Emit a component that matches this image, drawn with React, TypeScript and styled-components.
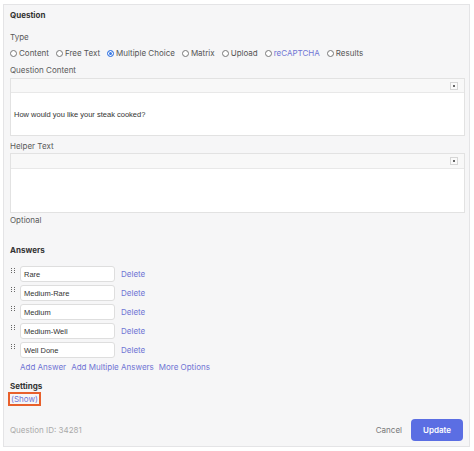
import React from "react";
import styled, { createGlobalStyle } from "styled-components";

const Global = createGlobalStyle`
  html, body { margin: 0; padding: 0; background: #ffffff; }
  body { font-family: Inter, "Noto Sans", sans-serif; }
  * { box-sizing: border-box; }
`;

const Panel = styled.div`
  margin: 4px 4px 0 3px;
  width: 467px;
  height: 443px;
  border: 1px solid #e4e4e6;
  background: #f6f6f7;
  padding: 4px 6px 0 6px;
  display: flex;
  flex-direction: column;
  font-size: 8px;
  color: #555;
`;

const Title = styled.div<{ $mt?: number }>`
  font-weight: 700;
  color: #333;
  line-height: 12px;
  font-size: 8px;
  margin-top: ${(p) => p.$mt ?? 0}px;
`;

const Label = styled.div<{ $mt?: number }>`
  line-height: 12px;
  color: #5a5a5a;
  margin-top: ${(p) => p.$mt ?? 0}px;
`;

const RadioRow = styled.div`
  display: flex;
  align-items: center;
  gap: 7px;
  height: 12px;
  margin-top: 4px;
`;

const RadioOption = styled.label<{ $accent?: boolean }>`
  display: flex;
  align-items: center;
  gap: 2px;
  color: ${(p) => (p.$accent ? "#6f74d4" : "#555")};
`;

const RadioDot = styled.span<{ $checked?: boolean }>`
  width: 7px;
  height: 7px;
  border-radius: 50%;
  border: 1px solid ${(p) => (p.$checked ? "#3d7be3" : "#777")};
  background: ${(p) => (p.$checked ? "#3d7be3" : "#fff")};
  box-shadow: ${(p) => (p.$checked ? "inset 0 0 0 1px #fff" : "none")};
  flex: none;
`;

const Editor = styled.div<{ $mt: number; $toolbar: number; $body: number }>`
  margin-top: ${(p) => p.$mt}px;
  width: 455px;
  border: 1px solid #e2e2e2;
  background: #fff;
  display: flex;
  flex-direction: column;
  .tb {
    height: ${(p) => p.$toolbar}px;
  }
  .bd {
    height: ${(p) => p.$body}px;
  }
`;

const Toolbar = styled.div`
  background: #f8f8f8;
  border-bottom: 1px solid #e8e8e8;
  display: flex;
  justify-content: flex-end;
  align-items: center;
  padding-right: 6px;
`;

const ToolButton = styled.span`
  width: 8px;
  height: 8px;
  border: 1px solid #d6d6d6;
  background: #fafafa;
  display: flex;
  align-items: center;
  justify-content: center;
  &::after {
    content: "";
    width: 2px;
    height: 2px;
    background: #666;
  }
`;

const EditorBody = styled.div`
  display: flex;
  align-items: center;
  padding-left: 3px;
  font-family: "Liberation Sans", Arial, sans-serif;
  font-size: 7.5px;
  color: #333;
`;

const AnswerList = styled.div`
  display: flex;
  flex-direction: column;
  gap: 3px;
  margin-top: 10px;
`;

const AnswerRow = styled.div`
  display: flex;
  align-items: center;
  height: 16px;
`;

const Handle = styled.svg`
  width: 4px;
  height: 6px;
  margin-left: 1px;
  align-self: flex-start;
  margin-top: 2px;
  flex: none;
`;

const AnswerInput = styled.div`
  width: 95px;
  height: 16px;
  margin-left: 5px;
  background: #fff;
  border: 1px solid #dedede;
  border-radius: 3px;
  display: flex;
  align-items: center;
  padding-left: 3px;
  font-family: "Liberation Sans", Arial, sans-serif;
  font-size: 7.5px;
  color: #333;
`;

const Link = styled.a<{ $ml?: number }>`
  color: #6f74d4;
  text-decoration: none;
  margin-left: ${(p) => p.$ml ?? 0}px;
  cursor: pointer;
`;

const LinksRow = styled.div`
  display: flex;
  gap: 5px;
  margin-top: 3px;
  margin-left: 10px;
  line-height: 12px;
`;

const ShowBox = styled.div`
  margin-left: -2px;
  align-self: flex-start;
  border: 2px solid #e8602c;
  line-height: 10px;
  padding: 0 1px;
`;

const Footer = styled.div`
  margin-top: 13px;
  display: flex;
  align-items: center;
  height: 22px;
`;

const Meta = styled.span`
  color: #aaa;
  flex: 1;
`;

const CancelButton = styled.span`
  color: #777;
  margin-right: 9px;
`;

const UpdateButton = styled.button`
  width: 52px;
  height: 22px;
  border: none;
  border-radius: 4px;
  background: #5b6ee3;
  color: #fff;
  font-family: inherit;
  font-size: 8px;
  font-weight: 600;
  padding: 0;
`;

const types = [
  { label: "Content" },
  { label: "Free Text" },
  { label: "Multiple Choice", checked: true },
  { label: "Matrix" },
  { label: "Upload" },
  { label: "reCAPTCHA", accent: true },
  { label: "Results" },
];

const answers = ["Rare", "Medium-Rare", "Medium", "Medium-Well", "Well Done"];

function DragHandle() {
  return (
    <Handle viewBox="0 0 4 6">
      {[0, 2, 4].map((y) =>
        [0, 3].map((x) => <rect key={`${x}-${y}`} x={x} y={y} width="1" height="1" fill="#666" />)
      )}
    </Handle>
  );
}

export default function App() {
  return (
    <>
      <Global />
      <Panel>
        <Title>Question</Title>
        <Label $mt={10}>Type</Label>
        <RadioRow>
          {types.map((t) => (
            <RadioOption key={t.label} $accent={t.accent}>
              <RadioDot $checked={t.checked} />
              {t.label}
            </RadioOption>
          ))}
        </RadioRow>
        <Label $mt={5}>Question Content</Label>
        <Editor $mt={2} $toolbar={14} $body={42}>
          <Toolbar className="tb">
            <ToolButton />
          </Toolbar>
          <EditorBody className="bd">How would you like your steak cooked?</EditorBody>
        </Editor>
        <Label $mt={4}>Helper Text</Label>
        <Editor $mt={1} $toolbar={15} $body={43}>
          <Toolbar className="tb">
            <ToolButton />
          </Toolbar>
          <EditorBody className="bd" />
        </Editor>
        <Label $mt={1}>Optional</Label>
        <Title $mt={18}>Answers</Title>
        <AnswerList>
          {answers.map((a) => (
            <AnswerRow key={a}>
              <DragHandle />
              <AnswerInput>{a}</AnswerInput>
              <Link $ml={6}>Delete</Link>
            </AnswerRow>
          ))}
        </AnswerList>
        <LinksRow>
          <Link>Add Answer</Link>
          <Link>Add Multiple Answers</Link>
          <Link>More Options</Link>
        </LinksRow>
        <Title $mt={7}>Settings</Title>
        <ShowBox>
          <Link>(Show)</Link>
        </ShowBox>
        <Footer>
          <Meta>Question ID: 34281</Meta>
          <CancelButton>Cancel</CancelButton>
          <UpdateButton>Update</UpdateButton>
        </Footer>
      </Panel>
    </>
  );
}
